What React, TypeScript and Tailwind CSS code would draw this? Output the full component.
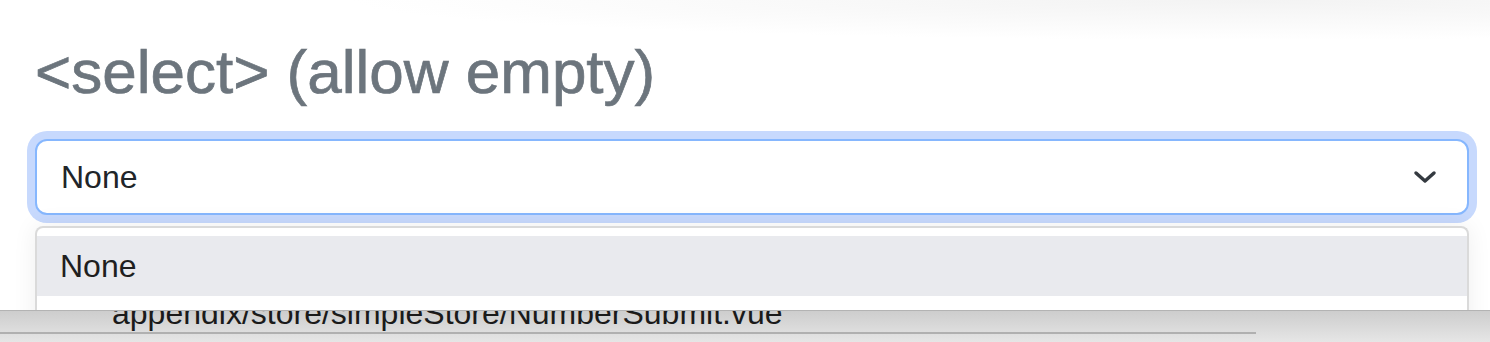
import React from 'react';

const font = { fontFamily: '"Liberation Sans", Arial, sans-serif' };

export default function App() {
  return (
    <div
      className="relative h-[342px] w-full overflow-hidden bg-white bg-[radial-gradient(ellipse_900px_40px_at_1250px_0,#f3f3f3,#ffffff)] text-[#212529]"
      style={font}
    >
      <div className="pl-[35px] pr-[21px] pt-[36px]">
        <h2 className="text-[62px] leading-[72px] font-normal text-[#6c757d] [-webkit-text-stroke:0.7px_#6c757d]">&lt;select&gt; (allow empty)</h2>

        {/* focused select */}
        <div className="mt-[31px] flex h-[76px] items-center justify-between rounded-[12px] border-2 border-[#86b7fe] bg-white pl-[24px] pr-[30px] shadow-[0_0_0_8px_#c7d9fd]">
          <span className="text-[32px] leading-[36px]">None</span>
          <svg width="24" height="14" viewBox="0 0 24 14" fill="none" stroke="#343a40" strokeWidth="3.5" strokeLinecap="round" strokeLinejoin="round">
            <polyline points="3,3 12,11 21,3" />
          </svg>
        </div>

        {/* open list */}
        <div className="mt-[11px] rounded-t-[8px] border-2 border-b-0 border-[#dadada] bg-white pt-[8px] shadow-[0_0_24px_rgba(0,0,0,0.07)]">
          <div className="flex h-[60px] items-center bg-[#e9eaee] pl-[23px] text-[32px] text-[#1f1f1f]">None</div>
          <div className="h-[60px]" />
        </div>
      </div>

      {/* bottom status bar */}
      <div className="absolute left-0 top-[310px] h-[32px] w-full overflow-hidden border-t border-[#b3b3b3] bg-gradient-to-b from-[#cdcdcd] to-[#e6e6e6]">
        <span className="absolute left-[112px] top-[-14px] whitespace-nowrap text-[32px] leading-[32px] text-[#1a1a1a]">
          appendix/store/simpleStore/NumberSubmit.vue
        </span>
        <div className="absolute left-0 top-[21px] h-[2px] w-[1256px] bg-[#b0b0b0]" />
      </div>
    </div>
  );
}
